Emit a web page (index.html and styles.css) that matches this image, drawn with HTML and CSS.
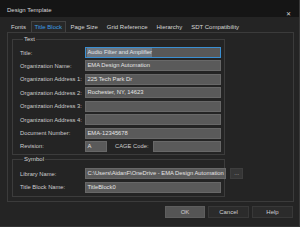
FILE: index.html
```html
<!DOCTYPE html>
<html>
<head>
<meta charset="utf-8">
<link rel="stylesheet" href="styles.css">
</head>
<body>
<div class="window">
  <div class="titlebar">
    <span class="title">Design Template</span>
    <span class="close">✕</span>
  </div>
  <div class="tabs">
    <span class="tab">Fonts</span>
    <span class="tab active">Title Block</span>
    <span class="tab">Page Size</span>
    <span class="tab">Grid Reference</span>
    <span class="tab">Hierarchy</span>
    <span class="tab">SDT Compatibility</span>
  </div>
  <div class="panel">
    <fieldset class="group">
      <legend>Text</legend>
      <div class="rows">
        <div class="row"><span class="lbl">Title:</span><div class="field focus"><span class="sel">Audio Filter and Amplifier</span></div></div>
        <div class="row"><span class="lbl">Organization Name:</span><div class="field">EMA Design Automation</div></div>
        <div class="row"><span class="lbl">Organization Address 1:</span><div class="field">225 Tech Park Dr</div></div>
        <div class="row"><span class="lbl">Organization Address 2:</span><div class="field">Rochester, NY, 14623</div></div>
        <div class="row"><span class="lbl">Organization Address 3:</span><div class="field"></div></div>
        <div class="row"><span class="lbl">Organization Address 4:</span><div class="field"></div></div>
        <div class="row"><span class="lbl">Document Number:</span><div class="field">EMA-12345678</div></div>
        <div class="row"><span class="lbl">Revision:</span>
          <div class="split">
            <div class="field rev">A</div>
            <span class="lbl cage">CAGE Code:</span>
            <div class="field grow"></div>
          </div>
        </div>
      </div>
    </fieldset>
    <fieldset class="group sym">
      <legend>Symbol</legend>
      <div class="rows">
        <div class="row"><span class="lbl">Library Name:</span>
          <div class="split">
            <div class="field grow">C:\Users\AidanF\OneDrive - EMA Design Automation</div>
            <span class="btn-dots">...</span>
          </div>
        </div>
        <div class="row"><span class="lbl">Title Block Name:</span><div class="field">TitleBlock0</div></div>
      </div>
    </fieldset>
  </div>
  <div class="buttons">
    <span class="btn primary">OK</span>
    <span class="btn">Cancel</span>
    <span class="btn">Help</span>
  </div>
</div>
</body>
</html>
```

FILE: styles.css
```css
* { box-sizing: border-box; }
html, body { margin: 0; padding: 0; background: #232323; }
body {
  font-family: "Liberation Sans", Arial, sans-serif;
  font-size: 5.8px;
  color: #d2d2d2;
}
.window {
  width: 300px;
  height: 227px;
  background: #242424;
  border-right: 1px solid #3a3a3a;
  border-bottom: 1px solid #333;
  display: flex;
  flex-direction: column;
  overflow: hidden;
}
.titlebar {
  height: 17px;
  background: #151515;
  display: flex;
  justify-content: space-between;
  align-items: flex-start;
  padding: 0 7px;
}
.title {
  font-size: 6px;
  padding-top: 7px;
  color: #dadada;
}
.close {
  font-size: 5.5px;
  padding-top: 11px;
  color: #d8d8d8;
  padding-right: 1px;
}
.tabs {
  display: flex;
  align-items: flex-end;
  height: 15px;
  padding-left: 6.5px;
  font-size: 6px;
}
.tab {
  height: 11px;
  line-height: 10px;
  padding: 0 3.5px;
  color: #d6d6d6;
  border: 1px solid transparent;
  border-bottom: none;
}
.tab.active {
  color: #3d9de0;
  border-color: #424242;
  background: #282828;
  padding: 0 3px;
}
.panel {
  margin-left: 7px;
  width: 287px;
  height: 170px;
  border: 1px solid #3b3b3b;
  padding: 3px 4px 4px;
  display: flex;
  flex-direction: column;
}
.group {
  margin: 0;
  width: 213px;
  border: 1px solid #3c3c3c;
  padding: 4px 3px 2px 7px;
  min-width: 0;
}
.group.sym {
  margin-top: 1.5px;
  padding-top: 5px;
  padding-bottom: 3px;
}
legend {
  padding: 0 1px;
  margin-left: 3px;
  font-size: 6px;
  line-height: 7px;
  color: #d4d4d4;
}
.rows {
  display: flex;
  flex-direction: column;
  gap: 2.43px;
}
.row {
  display: grid;
  grid-template-columns: 65px 1fr;
  align-items: center;
  height: 11px;
}
.lbl {
  white-space: nowrap;
  color: #cdcdcd;
}
.field {
  height: 11px;
  background: #5a5a5a;
  border: 1px solid #686868;
  padding: 0 1.5px;
  line-height: 9px;
  white-space: nowrap;
  overflow: hidden;
  color: #e4e4e4;
}
.field.focus {
  border-color: #3a8fd2;
  background: #585858;
  padding-left: 1px;
}
.sel {
  background: #6f7882;
  padding: 0 0.5px;
  display: inline-block;
  line-height: 9px;
}
.split {
  display: flex;
  align-items: center;
  height: 11px;
}
.field.rev { width: 22px; }
.cage { margin-left: 8px; width: 38px; }
.grow { flex: 1; min-width: 0; }
.btn-dots {
  width: 13px;
  height: 11px;
  margin-left: 4px;
  background: #363636;
  border: 1px solid #3e3e3e;
  text-align: center;
  line-height: 8px;
  color: #bdbdbd;
}
.buttons {
  display: flex;
  justify-content: flex-end;
  gap: 3px;
  padding: 4px 6px 0 0;
}
.btn {
  width: 41px;
  height: 12px;
  line-height: 10px;
  text-align: center;
  background: #2b2b2b;
  border: 1px solid #383838;
  color: #cfcfcf;
  font-size: 6px;
}
.btn.primary {
  width: 40px;
  background: #555;
  border-color: #5e5e5e;
}
```
